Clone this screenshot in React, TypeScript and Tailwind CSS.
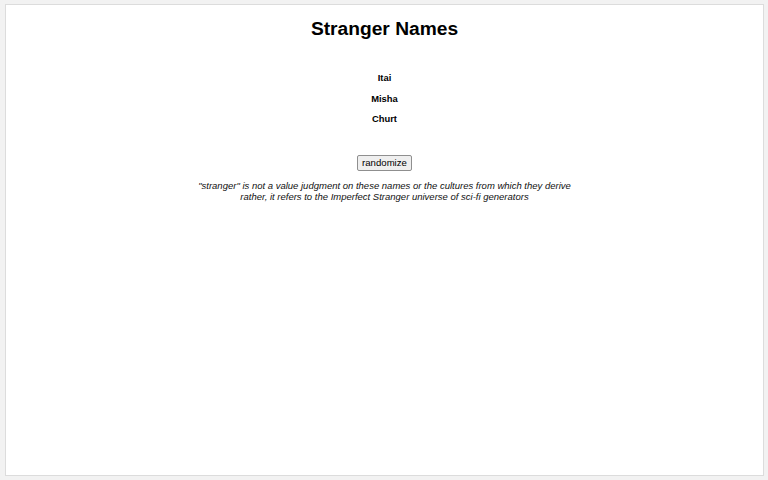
export default function App() {
  const names = ["Itai", "Misha", "Churt"];
  return (
    <div className="min-h-[480px] w-full bg-[#f2f2f2] pt-[4px] pl-[5px] pr-[4px] pb-[4px]" style={{ fontFamily: '"Liberation Sans", Arial, sans-serif' }}>
      <div className="h-[472px] w-[759px] border border-[#dcdcdc] bg-white text-black">
        <h1 className="mt-[13px] text-center text-[19.2px] font-bold leading-[22px]">Stranger Names</h1>
        <div className="mt-[32px] flex flex-col items-center gap-[9.5px]">
          {names.map((n) => (
            <div key={n} className="text-[9.4px] font-bold leading-[11px]">{n}</div>
          ))}
        </div>
        <div className="mt-[31px] flex justify-center">
          <button className="h-[16px] rounded-[2px] border border-[#8f8f8f] bg-[#efefef] px-[4px] text-[9.6px] leading-[12px] text-black">randomize</button>
        </div>
        <p className="mt-[9px] text-center text-[9.5px] italic leading-[11px] text-[#111]">
          "stranger" is not a value judgment on these names or the cultures from which they derive
          <br />
          rather, it refers to the Imperfect Stranger universe of sci-fi generators
        </p>
      </div>
    </div>
  );
}
